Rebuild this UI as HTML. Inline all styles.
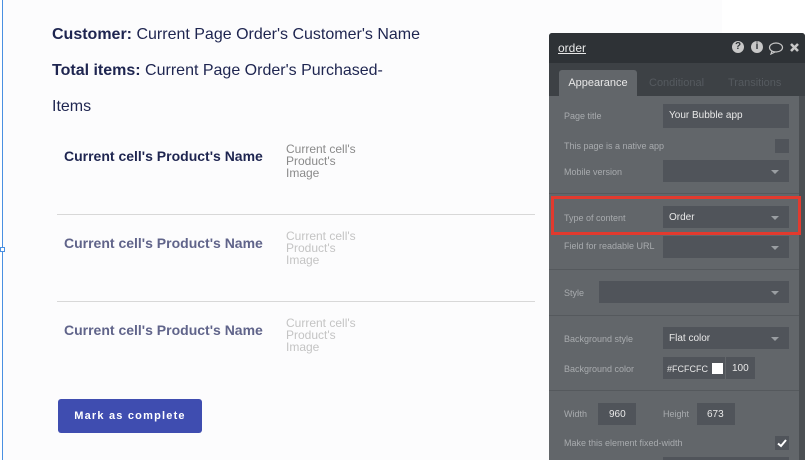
<!DOCTYPE html>
<html><head><meta charset="utf-8"><style>
*{margin:0;padding:0;box-sizing:border-box}
body{width:807px;height:460px;overflow:hidden;background:#fff;font-family:"Liberation Sans",sans-serif;position:relative}
.page{position:absolute;left:2px;top:0;width:720px;height:460px;background:#fcfcfd;border-left:1px solid #4a90e2}
.a{position:absolute;white-space:nowrap}
.h{font-size:16px;color:#1e2550}
.h b{font-weight:700}
.pn{font-size:14px;font-weight:700;color:#1e2550}
.pn2{color:#60648a}
.img{font-size:12px;line-height:12px;color:#8a8a8a}
.img2{color:#c4c4c4}
.hr{position:absolute;left:57px;width:478px;height:1px;background:#d8d8d8}
.btn{position:absolute;left:58px;top:399px;width:144px;height:34px;background:#3f4db0;border-radius:3px;color:#fff;font-size:11px;font-weight:700;letter-spacing:1.2px;text-align:center;line-height:34px}
.panel{position:absolute;left:549px;top:33px;width:256px;height:427px;background:#62666a;border-radius:3px 3px 0 0;overflow:hidden}
.hd{position:absolute;left:0;top:0;width:256px;height:30px;background:#2e3236}
.tabs{position:absolute;left:0;top:30px;width:256px;height:33px;background:#3d4145}
.tab{position:absolute;top:7px;height:26px;font-size:11px;line-height:26px;color:#555a5f}
.sb{position:absolute;right:0;top:63px;width:6px;height:364px;background:#4b4f53}
.l{position:absolute;font-size:9px;color:#a8abae;white-space:nowrap}
.f{position:absolute;background:#50545a;font-size:10px;color:#e8e8e8;line-height:24px;padding-left:6px;white-space:nowrap}
.dd:after{content:"";position:absolute;right:10px;top:10px;border:4px solid transparent;border-top:4px solid #9a9ea2}
.sep{position:absolute;left:0;width:250px;height:1px;background:#55595d}
</style></head><body>
<div class="page"></div>
<div style="position:absolute;left:0;top:247px;width:5px;height:5px;border:1px solid #4a90e2;background:#fff"></div>
<div class="a h" style="left:52px;top:26px"><b>Customer:</b> Current Page Order's Customer's Name</div>
<div class="a h" style="left:52px;top:62px"><b>Total items:</b> Current Page Order's Purchased-</div>
<div class="a h" style="left:52px;top:98px">Items</div>

<div class="a pn" style="left:64px;top:148px">Current cell's Product's Name</div>
<div class="a img" style="left:286px;top:143px">Current cell's<br>Product's<br>Image</div>
<div class="hr" style="top:214px"></div>
<div class="a pn pn2" style="left:64px;top:235px">Current cell's Product's Name</div>
<div class="a img img2" style="left:286px;top:230px">Current cell's<br>Product's<br>Image</div>
<div class="hr" style="top:301px"></div>
<div class="a pn pn2" style="left:64px;top:322px">Current cell's Product's Name</div>
<div class="a img img2" style="left:286px;top:317px">Current cell's<br>Product's<br>Image</div>
<div class="btn">Mark as complete</div>

<div class="panel">
 <div class="hd">
  <div class="a" style="left:9px;top:8px;font-size:12px;color:#e8e8e8;text-decoration:underline">order</div>
  <div class="a" style="left:183px;top:8px;width:12px;height:12px;border-radius:50%;background:#c8c8c8;color:#2e3236;font-size:10px;font-weight:bold;text-align:center;line-height:12px">?</div>
  <div class="a" style="left:202px;top:8px;width:12px;height:12px;border-radius:50%;background:#c8c8c8;color:#2e3236;font-size:10px;font-weight:bold;text-align:center;line-height:12px">i</div>
  <svg class="a" style="left:219px;top:9px" width="16" height="13"><ellipse cx="8" cy="5.5" rx="6.5" ry="4.5" fill="none" stroke="#c8c8c8" stroke-width="1.2"/><path d="M4 9 L3 12 L7 10" fill="none" stroke="#c8c8c8" stroke-width="1.2"/></svg>
  <svg class="a" style="left:240px;top:9px" width="11" height="11"><path d="M2 2L9 9M9 2L2 9" stroke="#c8c8c8" stroke-width="2.6"/></svg>
 </div>
 <div class="tabs">
  <div class="tab" style="left:10px;width:78px;background:#62666a;border-radius:3px 3px 0 0;color:#e8e8e8;text-align:center">Appearance</div>
  <div class="tab" style="left:100px">Conditional</div>
  <div class="tab" style="left:179px">Transitions</div>
 </div>
 <div class="sb"></div>
 <div class="l" style="left:15px;top:78px">Page title</div>
 <div class="f" style="left:114px;top:71px;width:126px">Your Bubble app</div>
 <div class="l" style="left:15px;top:108px">This page is a native app</div>
 <div class="f" style="left:226px;top:106px;width:14px;height:14px;padding:0"></div>
 <div class="l" style="left:15px;top:134px">Mobile version</div>
 <div class="f dd" style="left:114px;top:127px;width:126px;height:22px"></div>
 <div class="sep" style="top:160px"></div>
 <div class="l" style="left:15px;top:180px">Type of content</div>
 <div class="f dd" style="left:114px;top:173px;width:126px;height:22px">Order</div>
 <div style="position:absolute;left:2px;top:163px;width:250px;height:39px;border:3px solid #e23a2e"></div>
 <div class="l" style="left:15px;top:208px">Field for readable URL</div>
 <div class="f dd" style="left:114px;top:203px;width:126px;height:22px"></div>
 <div class="sep" style="top:236px"></div>
 <div class="l" style="left:15px;top:255px">Style</div>
 <div class="f dd" style="left:50px;top:248px;width:190px;height:22px"></div>
 <div class="sep" style="top:282px"></div>
 <div class="l" style="left:15px;top:301px">Background style</div>
 <div class="f dd" style="left:114px;top:294px;width:126px;height:22px">Flat color</div>
 <div class="l" style="left:15px;top:331px">Background color</div>
 <div class="f" style="left:114px;top:324px;width:62px;height:22px;padding-left:4px;font-size:9px">#FCFCFC</div>
 <div style="position:absolute;left:163px;top:330px;width:11px;height:11px;background:#fff"></div>
 <div class="f" style="left:177px;top:324px;width:29px;height:22px;padding-left:6px">100</div>
 <div class="sep" style="top:357px"></div>
 <div class="l" style="left:15px;top:376px">Width</div>
 <div class="f" style="left:49px;top:370px;width:38px;height:22px;padding-left:11px">960</div>
 <div class="l" style="left:114px;top:376px">Height</div>
 <div class="f" style="left:148px;top:370px;width:38px;height:22px;padding-left:10px">673</div>
 <div class="l" style="left:15px;top:405px">Make this element fixed-width</div>
 <div class="f" style="left:226px;top:403px;width:14px;height:14px;padding:0"><svg width="14" height="14" style="position:absolute;left:0;top:0"><path d="M3 7.5L6 10L11 4" fill="none" stroke="#fff" stroke-width="2"/></svg></div>
 <div class="f" style="left:114px;top:424px;width:126px;height:10px"></div>
</div>
</body></html>
